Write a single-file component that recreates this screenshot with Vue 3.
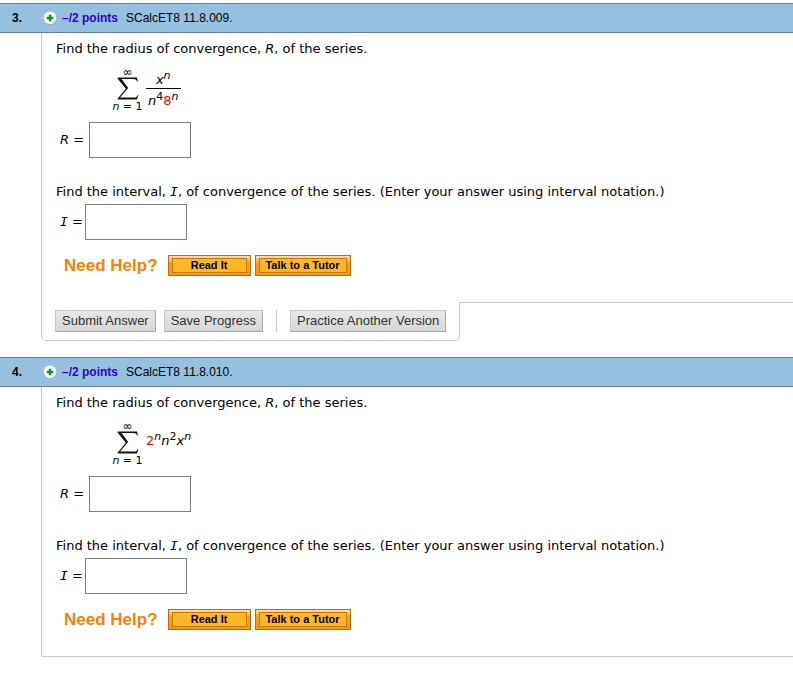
<script setup>
const questions = [
  { id: 'q9', number: 3, source: 'SCalcET8 11.8.009.', series: 'fraction', actions: true },
  { id: 'q10', number: 4, source: 'SCalcET8 11.8.010.', series: 'product', actions: false },
]
</script>

<template>
  <main class="assignment">
    <section v-for="q in questions" :key="q.id" class="question">
      <header class="bar">
        <span class="number">{{ q.number }}.</span>
        <svg class="plus" viewBox="0 0 14 14" aria-hidden="true">
          <circle cx="7" cy="7.4" r="6.6" fill="#8ba4b4" />
          <circle cx="7" cy="6.8" r="6.4" fill="#f8f8f6" />
          <path d="M6 4h2v2h2v2H8v2H6V8H4V6h2z" fill="#0a9410" stroke="#0a9410" stroke-width=".4" />
        </svg>
        <a class="points" href="#">–/2 points</a>
        <span class="source">{{ q.source }}</span>
      </header>

      <div class="body">
        <p class="prompt">Find the radius of convergence, <i>R</i>, of the series.</p>

        <div class="series">
          <div class="sum">
            <span class="upper">∞</span>
            <svg class="sigma" viewBox="0 0 22 23" aria-hidden="true">
              <path d="M.6 .6H20L20.8 4.4H20C19.5 2.6 18.4 1.9 16 1.9H4.6L11.2 10.9L3 20.6H17C19.4 20.6 20.3 19.4 20.8 18H21.4L20 22.6H.6V21.8L8.8 11.8L.6 1.6Z" fill="#111" />
            </svg>
            <span class="lower"><i>n</i> = 1</span>
          </div>
          <div v-if="q.series === 'fraction'" class="fraction">
            <span class="top"><i>x</i><sup><i>n</i></sup></span>
            <span class="bottom"><i>n</i><sup>4</sup><b>8</b><sup><i>n</i></sup></span>
          </div>
          <div v-else class="product">
            <b>2</b><sup><i>n</i></sup><i>n</i><sup>2</sup><i>x</i><sup><i>n</i></sup>
          </div>
        </div>

        <div class="answer">
          <label :for="q.id + '-r'"><i>R</i> =</label>
          <input :id="q.id + '-r'" type="text" />
        </div>

        <p class="prompt second">
          Find the interval, <i class="serif-i">I</i>, of convergence of the series. (Enter your answer using interval notation.)
        </p>

        <div class="answer interval">
          <label :for="q.id + '-i'"><i class="serif-i">I</i> =</label>
          <input :id="q.id + '-i'" type="text" />
        </div>

        <div class="help">
          <strong>Need Help?</strong>
          <button type="button" class="read"><span>Read It</span></button>
          <button type="button" class="tutor"><span>Talk to a Tutor</span></button>
        </div>
      </div>

      <footer v-if="q.actions" class="footer">
        <div class="tab">
          <button type="button">Submit Answer</button>
          <button type="button">Save Progress</button>
          <span class="divider"></span>
          <button type="button">Practice Another Version</button>
        </div>
        <div class="rule"></div>
      </footer>
      <div v-else class="rule closing"></div>
    </section>
  </main>
</template>

<style>
body {
  background: #fff;
}
</style>

<style scoped>
.assignment {
  padding-top: 3px;
  color: #000;
  font-family: Verdana, "DejaVu Sans", sans-serif;
  font-size: 13px;
  white-space: nowrap;
  overflow: hidden;
}
.question {
  margin-bottom: 16px;
}
.bar {
  display: flex;
  align-items: center;
  box-sizing: border-box;
  height: 30px;
  padding-left: 12px;
  border-top: 1px solid #5f7f95;
  border-bottom: 1px solid #5f7f95;
  background: #95c0e0;
  font: 12px/16px "Liberation Sans", Arial, sans-serif;
}
.number {
  width: 31px;
  font-weight: bold;
}
.plus {
  width: 14px;
  height: 14px;
  margin-right: 5px;
}
.points {
  margin-right: 8px;
  color: #3300cc;
  font-weight: bold;
  text-decoration: none;
}
.body {
  margin-left: 41px;
  padding: 7px 0 26px 14px;
  border-left: 1px solid #c8c8c8;
}
.prompt {
  margin: 0;
  line-height: 18px;
}
.serif-i {
  font-family: "DejaVu Sans Mono", monospace;
}
.series {
  display: flex;
  align-items: center;
  height: 48px;
  margin: 8px 0 8px 56px;
}
.sum {
  display: flex;
  flex-direction: column;
  align-items: center;
  width: 31px;
  margin-right: 3px;
  font-size: 11px;
}
.upper {
  font-size: 12px;
  line-height: 10px;
}
.lower {
  line-height: 14px;
}
.sigma {
  width: 22px;
  height: 23px;
}
sup {
  font-size: 11px;
  line-height: 0;
  vertical-align: 5px;
}
b {
  color: #f00;
  font-weight: normal;
}
.fraction {
  text-align: center;
  line-height: 16px;
}
.product {
  padding-bottom: 8px;
}
.top,
.bottom {
  display: block;
  padding: 0 2px;
}
.top {
  border-bottom: 1px solid #000;
}
.bottom {
  padding-top: 4px;
}
.answer {
  display: flex;
  align-items: center;
  gap: 5px;
  padding-left: 4px;
}
.interval {
  gap: 2px;
}
.answer label {
  padding-bottom: 2px;
}
.answer input {
  box-sizing: border-box;
  width: 102px;
  height: 36px;
  padding: 4px;
  border: 1px solid #808080;
  border-radius: 0;
  background: #fff;
  font: inherit;
}
.second {
  margin: 25px 0 3px;
}
.help {
  display: flex;
  align-items: center;
  gap: 4px;
  margin-top: 15px;
  padding-left: 8px;
}
.help strong {
  margin-right: 6px;
  color: #f98006;
  font: bold 17px/21px "Liberation Sans", Arial, sans-serif;
}
.help button {
  box-sizing: border-box;
  height: 21px;
  padding: 2px 3px;
  border: 1px solid #b86d10;
  background: linear-gradient(#ffdfa8, #ff9c08 40%, #ff9800);
  font: bold 11px/13px "Liberation Sans", Arial, sans-serif;
  color: #000;
}
.help button span {
  display: block;
  border: 1px solid #c07818;
  background: #ffb824;
}
.read {
  width: 83px;
}
.tutor {
  width: 96px;
}
.footer {
  display: flex;
}
.tab {
  display: flex;
  align-items: center;
  box-sizing: border-box;
  height: 39px;
  margin-left: 41px;
  padding: 0 13px;
  border: 1px solid #c8c8c8;
  border-top: 0;
  border-radius: 0 0 5px 5px;
}
.tab button {
  box-sizing: border-box;
  height: 22px;
  padding: 0 6px;
  border: 1px solid #a8a8a8;
  border-top-color: #c8c8c8;
  border-left-color: #c8c8c8;
  background: linear-gradient(#e8e8e8, #d6d6d6);
  color: #333;
  font: 13px/18px "Liberation Sans", Arial, sans-serif;
}
.tab button + button {
  margin-left: 8px;
}
.divider {
  width: 1px;
  height: 22px;
  margin: 0 13px;
  background: #c8c8c8;
}
.rule {
  flex: 1;
  border-top: 1px solid #c8c8c8;
}
.closing {
  margin-left: 41px;
}
</style>
